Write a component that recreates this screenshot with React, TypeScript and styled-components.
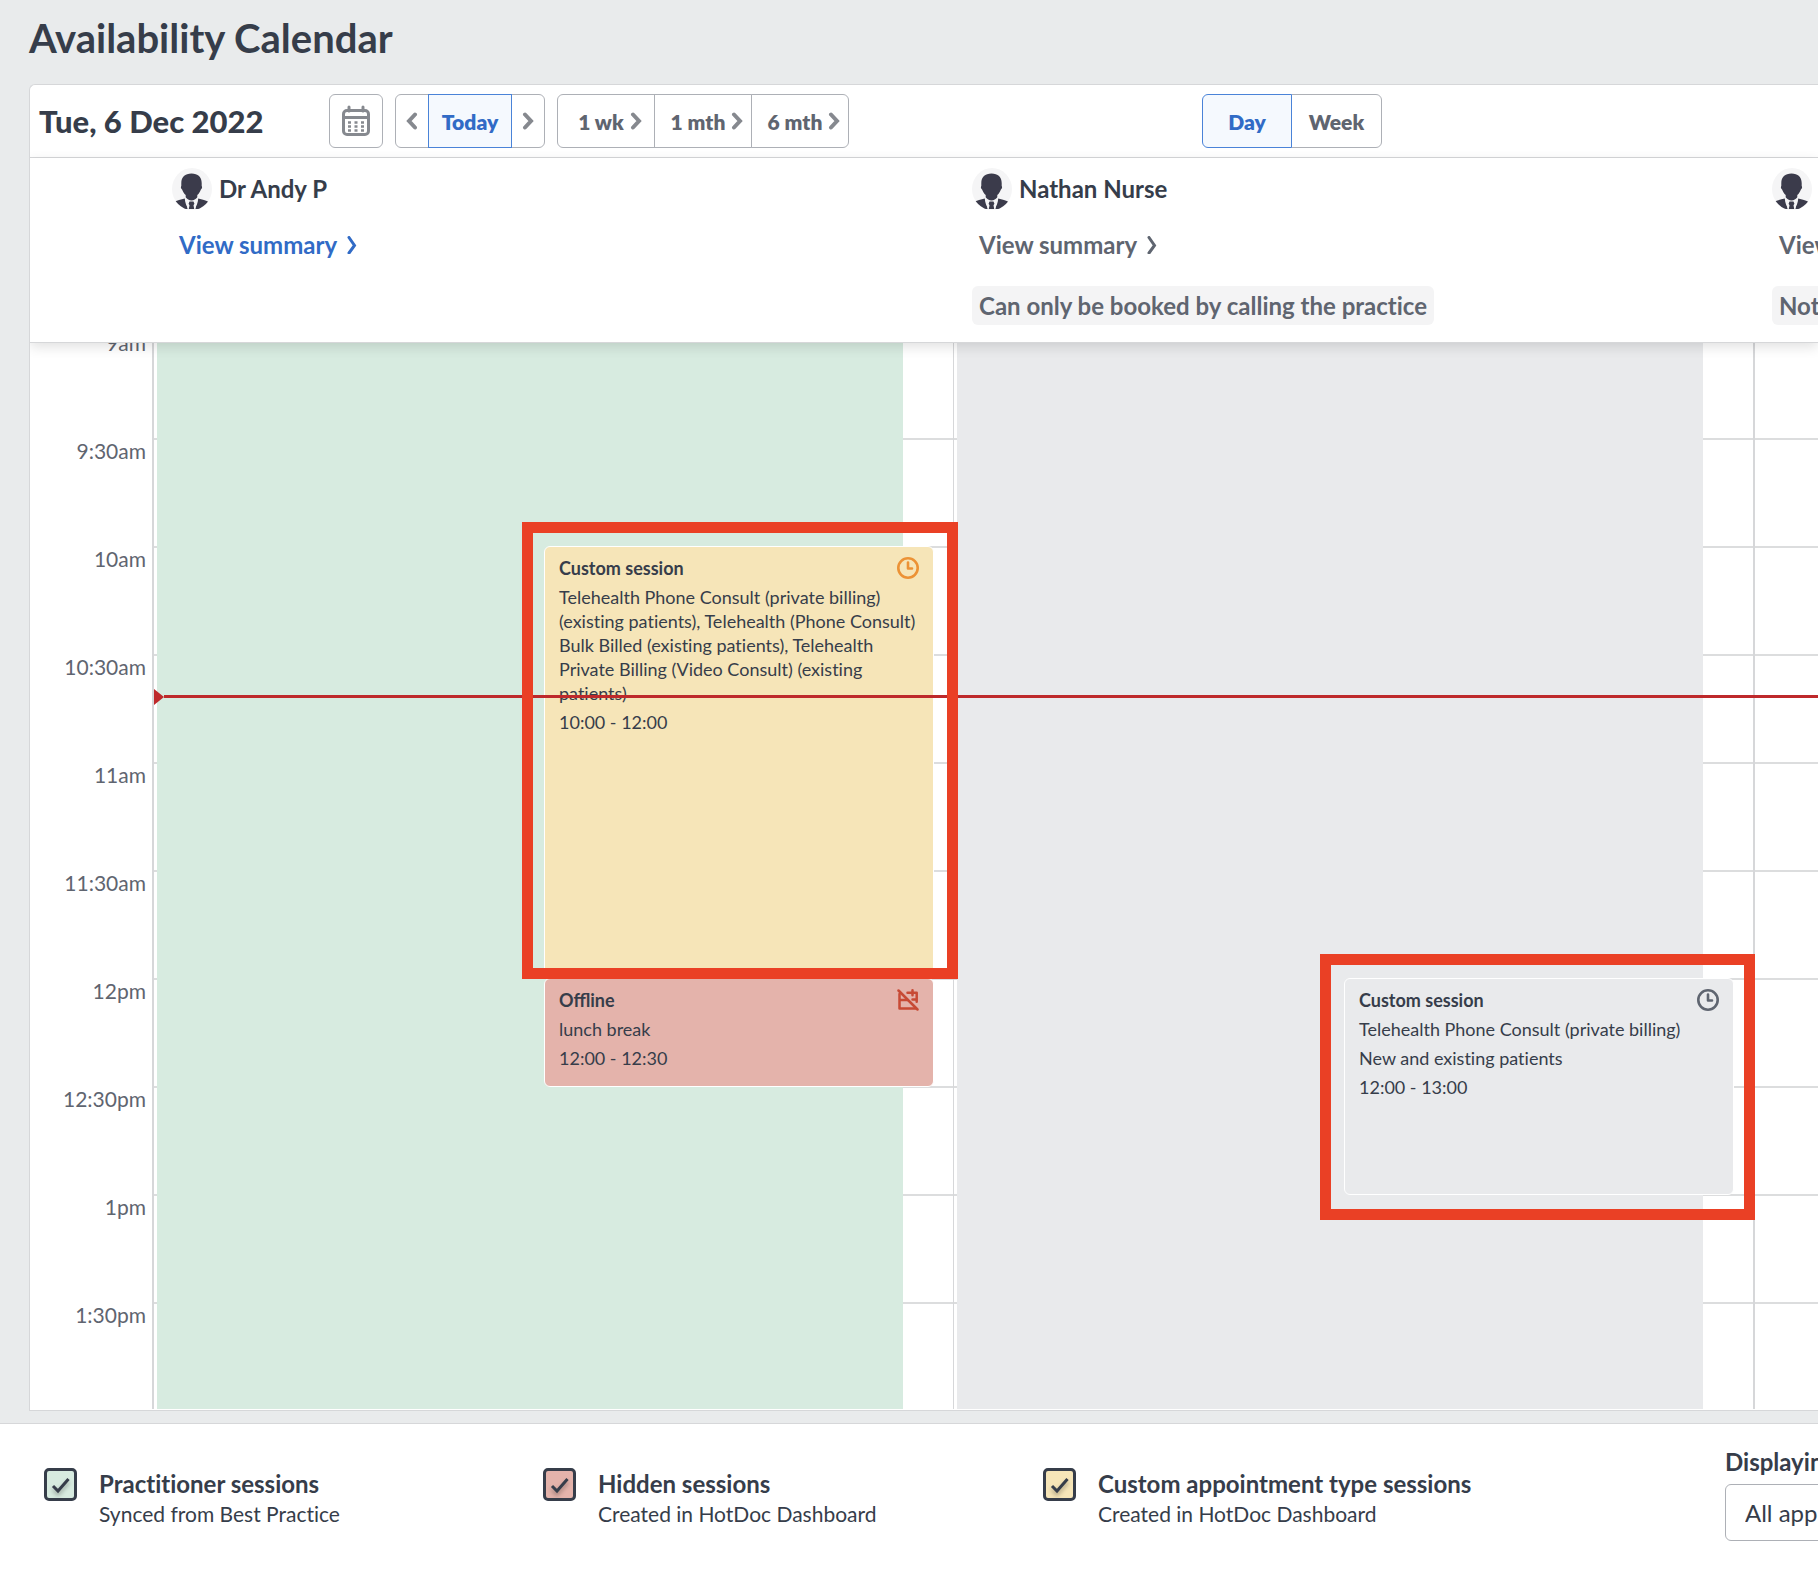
import React from "react";
import styled, { createGlobalStyle } from "styled-components";

const color = {
  page: "#e9ebec",
  line: "#d6d7d9",
  control: "#adb0b6",
  ink: "#363d4a",
  muted: "#5f6570",
  icon: "#86898f",
  blue: "#316bc6",
  blueLine: "#4a83d8",
  blueTint: "#f5f9fe",
  now: "#be292b",
  callout: "#ea4025",
};

const ROW = 108;
const DAY_START = 9 * 60;
const ROW_COUNT = 10;

const Global = createGlobalStyle`
  *, *::before, *::after { box-sizing: border-box; }
  html, body { margin: 0; }
  body {
    overflow-x: hidden;
    background: ${color.page};
    color: ${color.ink};
    font-family: Lato, "Liberation Sans", sans-serif;
    font-variant-ligatures: none;
  }
  button, input, select { font: inherit; color: inherit; margin: 0; }
`;

const Page = styled.div`
  display: flex;
  flex-direction: column;
  height: 100vh;
  min-height: 900px;
  overflow: hidden;
`;

const PageTitle = styled.h1`
  margin: 0;
  padding: 14px 29px 22px;
  font-size: 40px;
  line-height: 48px;
  font-weight: 700;
`;

const Card = styled.main`
  flex: 1;
  min-height: 0;
  display: flex;
  flex-direction: column;
  margin-left: 29px;
  overflow: hidden;
  background: #fff;
  border: 1px solid ${color.line};
  border-right: 0;
  border-top-left-radius: 6px;
`;

const Toolbar = styled.div`
  display: grid;
  grid-template-columns: 1172fr 616fr;
  align-items: center;
  height: 73px;
  flex: none;
  border-bottom: 1px solid ${color.line};
`;

const ToolbarMain = styled.div`
  display: flex;
  align-items: center;
  gap: 12px;
  padding-left: 9px;
`;

const CurrentDate = styled.h2`
  margin: 0;
  width: 278px;
  white-space: nowrap;
  font-size: 31px;
  line-height: 40px;
  font-weight: 900;
`;

const ButtonGroup = styled.div`
  display: flex;
`;

const ToolButton = styled.button<{ $width: number; $active?: boolean; $step?: boolean }>`
  position: relative;
  z-index: ${(p) => (p.$active ? 1 : 0)};
  display: flex;
  align-items: center;
  justify-content: center;
  gap: 6px;
  width: ${(p) => p.$width}px;
  height: 54px;
  padding: 2px 0 0 ${(p) => (p.$step ? 8 : 0)}px;
  border: 1px solid ${(p) => (p.$active ? color.blueLine : color.control)};
  background: ${(p) => (p.$active ? color.blueTint : "#fff")};
  color: ${(p) => (p.$active ? color.blue : color.muted)};
  font-size: 21px;
  line-height: 24px;
  font-weight: 800;
  cursor: pointer;

  & + & { margin-left: -1px; }
  &:first-child { border-top-left-radius: 6px; border-bottom-left-radius: 6px; }
  &:last-child { border-top-right-radius: 6px; border-bottom-right-radius: 6px; }
  & > svg { margin-bottom: 2px; }
`;

const People = styled.div`
  position: relative;
  z-index: 5;
  display: flex;
  flex: none;
  height: 185px;
  padding-left: 123px;
  background: #fff;
  border-bottom: 1px solid ${color.line};
  box-shadow: 0 4px 12px rgba(0, 0, 0, 0.12);
`;

const Person = styled.section`
  flex: 0 0 800px;
  display: flex;
  flex-direction: column;
  align-items: flex-start;
  padding: 10px 19px 0;
`;

const PersonName = styled.h3`
  display: flex;
  align-items: center;
  gap: 7px;
  height: 42px;
  margin: 0;
  font-size: 24px;
  line-height: 28px;
  font-weight: 700;
`;

const SummaryLink = styled.a<{ $primary?: boolean }>`
  display: flex;
  align-items: center;
  gap: 10px;
  margin-top: 19px;
  padding: 0 7px;
  color: ${(p) => (p.$primary ? color.blue : color.muted)};
  font-size: 24px;
  line-height: 32px;
  font-weight: 700;
  text-decoration: none;
`;

const Restriction = styled.p`
  margin: 25px 0 0;
  padding: 4px 7px 3px;
  border-radius: 6px;
  background: #f4f4f5;
  color: ${color.muted};
  font-size: 24px;
  line-height: 32px;
  font-weight: 700;
  white-space: nowrap;
`;

const Viewport = styled.div`
  flex: 1;
  min-height: 0;
  overflow: hidden;
  margin-bottom: 1px;
`;

const Timeline = styled.div`
  position: relative;
  display: flex;
  margin-top: -13px;
`;

const Gutter = styled.div`
  flex: 0 0 123px;
  display: grid;
  grid-template-rows: repeat(${ROW_COUNT}, ${ROW}px);
  border-right: 1px solid ${color.line};
`;

const TimeLabel = styled.span`
  padding-right: 6px;
  text-align: right;
  color: ${color.muted};
  font-size: 21px;
  line-height: 26px;
`;

const Column = styled.div<{ $divider: number }>`
  flex: 0 0 800px;
  display: grid;
  grid-template-columns: 100%;
  grid-template-rows: repeat(${ROW_COUNT}, ${ROW}px);
  border-left: ${(p) => p.$divider}px solid ${color.line};
`;

const Slot = styled.div<{ $row: number }>`
  grid-column: 1;
  grid-row: ${(p) => p.$row};
  border-top: 2px solid #dcddde;
`;

const Availability = styled.div<{ $tone: string }>`
  grid-column: 1;
  grid-row: 1 / -1;
  margin: 0 50px 0 3px;
  background: ${(p) => p.$tone};
`;

const Session = styled.article<{ $from: number; $to: number; $tone: string }>`
  grid-column: 1;
  grid-row: ${(p) => p.$from} / ${(p) => p.$to};
  display: grid;
  grid-template-columns: 1fr 22px;
  align-content: start;
  row-gap: 5px;
  margin: 0 19px -1px 390px;
  padding: 9px 14px;
  border: 1px solid #fff;
  border-radius: 6px;
  background: ${(p) => p.$tone};
  font-size: 18px;
  line-height: 24px;

  & > svg { margin-top: 1px; }
`;

const SessionTitle = styled.h4`
  margin: 0;
  font-size: 18px;
  font-weight: 700;
  font-variant-ligatures: normal;
`;

const SessionText = styled.p`
  grid-column: 1 / -1;
  margin: 0;
`;

const Callout = styled.div<{ $from: number; $to: number; $edges: string }>`
  grid-column: 1;
  grid-row: ${(p) => p.$from} / ${(p) => p.$to};
  position: relative;
  z-index: 4;
  margin: ${(p) => p.$edges};
  border: 11px solid ${color.callout};
  pointer-events: none;
`;

const NowMarker = styled.div`
  position: absolute;
  z-index: 3;
  left: 124px;
  right: 0;
  display: flex;
  align-items: center;
  height: 15px;

  &::before {
    content: "";
    border: solid transparent;
    border-width: 8px 0 8px 10px;
    border-left-color: ${color.now};
  }
  &::after {
    content: "";
    flex: 1;
    height: 3px;
    background: ${color.now};
  }
`;

const Footer = styled.footer`
  display: grid;
  grid-template-columns: minmax(0, 499fr) minmax(0, 500fr) minmax(0, 682fr) minmax(0, 93fr);
  align-items: start;
  flex: none;
  height: 149px;
  margin-top: 12px;
  padding-left: 44px;
  background: #fff;
  border-top: 1px solid ${color.line};
`;

const LegendItem = styled.label`
  display: flex;
  gap: 22px;
  padding-top: 44px;
  cursor: pointer;
`;

const CheckWrap = styled.span`
  display: grid;
  width: 33px;
  height: 33px;

  & > * { grid-area: 1 / 1; }
  & > svg { pointer-events: none; filter: drop-shadow(0 3px 2px rgba(0, 0, 0, 0.3)); }
  & > input:not(:checked) + svg { visibility: hidden; }
`;

const Check = styled.input<{ $tone: string }>`
  appearance: none;
  width: 33px;
  height: 33px;
  border: 3px solid ${color.ink};
  border-radius: 5px;
  background: ${(p) => p.$tone};
`;

const LegendText = styled.span`
  display: flex;
  flex-direction: column;
  font-size: 21px;
  line-height: 28px;
`;

const LegendTitle = styled.strong`
  font-size: 24px;
  line-height: 32px;
  font-weight: 700;
`;

const Filter = styled.div`
  display: flex;
  flex-direction: column;
  gap: 6px;
  padding-top: 22px;
`;

const FilterLabel = styled.label`
  font-size: 24px;
  line-height: 32px;
  font-weight: 700;
`;

const FilterSelect = styled.select`
  appearance: none;
  width: 320px;
  height: 57px;
  padding: 0 19px;
  border: 1px solid ${color.control};
  border-radius: 6px;
  background: #fff;
  font-size: 24px;
`;

function Chevron({ dir = "right" }: { dir?: "left" | "right" }) {
  return (
    <svg width="12" height="18" viewBox="0 0 12 18" fill="none" stroke={color.icon} strokeWidth="4" strokeLinecap="round" strokeLinejoin="miter" aria-hidden="true">
      <path d={dir === "right" ? "M3 2.500 9 9l-6 6.500" : "M9 2.500 3 9l6 6.500"} />
    </svg>
  );
}

function LinkChevron() {
  return (
    <svg width="10" height="18" viewBox="0 0 10 18" fill="none" stroke="currentColor" strokeWidth="3" strokeLinecap="round" aria-hidden="true">
      <path d="M2 1.500 7.500 9.500 2 17" />
    </svg>
  );
}

function CalendarIcon() {
  return (
    <svg width="28" height="32" viewBox="0 0 28 32" fill="none" stroke={color.icon} aria-hidden="true">
      <rect x="1.500" y="5.500" width="25" height="24" rx="3.500" strokeWidth="3" />
      <path d="M1.500 12.500h25" strokeWidth="3" />
      <path d="M7 2v4M21 2v4" strokeWidth="3" strokeLinecap="round" />
      <path d="M6 17.500h3M12.500 17.500h3M19 17.500h3M6 21.500h3M12.500 21.500h3M19 21.500h3M6 25.500h3M12.500 25.500h3M19 25.500h3" strokeWidth="2.400" />
    </svg>
  );
}

function Avatar() {
  const id = React.useId();
  return (
    <svg width="40" height="42" viewBox="0 0 40 42" aria-hidden="true">
      <defs>
        <clipPath id={id}>
          <ellipse cx="20" cy="21" rx="20" ry="21" />
        </clipPath>
      </defs>
      <g clipPath={`url(#${id})`}>
        <rect width="40" height="42" fill="#f5f5f6" />
        <g fill="#3b3b4b">
          <path d="M19.500 5.500C13 5.500 9.300 9.300 9.300 15v3c-.8.600-.4 3 .8 3.400.7 2.200 2 4.200 3.600 5.600v2.300c1.300 2 3.500 3.200 5.800 3.200s4.500-1.200 5.800-3.200V27c1.600-1.400 2.900-3.400 3.600-5.600 1.200-.4 1.600-2.800.8-3.400v-3c0-5.700-3.700-9.500-10.200-9.500Z" />
          <path d="M12.800 30.500C9 31.500 5 32.200 1.500 34.500V41h15c-2-3-3.500-6.500-3.700-10.500ZM26.200 30.500c3.800 1 7.800 1.700 11.300 4V41h-15c2-3 3.500-6.500 3.700-10.500Z" />
        </g>
        <path d="m14 32 3.500 2.500-.5 6.500h-1.500ZM25 32l-3.500 2.500.5 6.500h1.500Z" fill="#f5f5f6" />
        <path d="M17.500 33.500h4l.9 2.300-.9 1.500.7 3.700h-5.400l.7-3.700-.9-1.500Z" fill="#3b3b4b" />
      </g>
    </svg>
  );
}

function ClockIcon({ tone }: { tone: string }) {
  return (
    <svg width="22" height="22" viewBox="0 0 22 22" fill="none" stroke={tone} strokeWidth="2.600" aria-hidden="true">
      <circle cx="11" cy="11" r="9.700" />
      <path d="M11 5.500V11.500h4" strokeLinecap="round" strokeLinejoin="round" />
    </svg>
  );
}

function CalendarOffIcon() {
  return (
    <svg width="22" height="22" viewBox="0 0 22 22" fill="none" stroke="#c74a35" strokeWidth="2.500" strokeLinecap="round" strokeLinejoin="round" aria-hidden="true">
      <path d="M1.500 1.500 20.500 20.500" />
      <path d="M2.500 5v14.500H18.500M2.500 11h8" />
      <path d="M10.500 3.800h9.200v9M15.500 1.300v5M15.500 10.500h4" />
    </svg>
  );
}

function CheckMark() {
  return (
    <svg width="33" height="33" viewBox="0 0 33 33" fill="none" stroke={color.ink} strokeWidth="3" aria-hidden="true">
      <path d="m9 18 5 5L24.500 11" />
    </svg>
  );
}

type SessionData = {
  title: string;
  lines: string[];
  from: number;
  to: number;
  tone: string;
  icon: React.ReactNode;
};

type Practitioner = {
  id: string;
  name: string;
  restriction?: string;
  primary?: boolean;
  divider: number;
  tone?: string;
  sessions: SessionData[];
  callout?: { from: number; to: number; edges: string };
};

const practitioners: Practitioner[] = [
  {
    id: "andy",
    name: "Dr Andy P",
    primary: true,
    divider: 1,
    tone: "#d7ebe0",
    sessions: [
      {
        title: "Custom session",
        lines: [
          "Telehealth Phone Consult (private billing) (existing patients), Telehealth (Phone Consult) Bulk Billed (existing patients), Telehealth Private Billing (Video Consult) (existing patients)",
          "10:00 - 12:00",
        ],
        from: 3,
        to: 7,
        tone: "#f6e5b8",
        icon: <ClockIcon tone="#ec9235" />,
      },
      {
        title: "Offline",
        lines: ["lunch break", "12:00 - 12:30"],
        from: 7,
        to: 8,
        tone: "#e4b3ab",
        icon: <CalendarOffIcon />,
      },
    ],
    callout: { from: 3, to: 7, edges: "-24px -5px -1px 368px" },
  },
  {
    id: "nathan",
    name: "Nathan Nurse",
    restriction: "Can only be booked by calling the practice",
    divider: 1,
    tone: "#e9eaec",
    sessions: [
      {
        title: "Custom session",
        lines: ["Telehealth Phone Consult (private billing)", "New and existing patients", "12:00 - 13:00"],
        from: 7,
        to: 9,
        tone: "#e9eaec",
        icon: <ClockIcon tone={color.muted} />,
      },
    ],
    callout: { from: 7, to: 9, edges: "-24px -2px -26px 366px" },
  },
  { id: "third", name: "", restriction: "Not available online", divider: 2, sessions: [] },
];

const legend = [
  { title: "Practitioner sessions", note: "Synced from Best Practice", tone: "#d7ebe0" },
  { title: "Hidden sessions", note: "Created in HotDoc Dashboard", tone: "#e4b3ab" },
  { title: "Custom appointment type sessions", note: "Created in HotDoc Dashboard", tone: "#f6e5b8" },
];

const rows = Array.from({ length: ROW_COUNT }, (_, i) => i);

function timeLabel(row: number) {
  const minutes = DAY_START + row * 30;
  const hour = Math.floor(minutes / 60);
  const rest = minutes % 60 ? ":30" : "";
  return `${hour > 12 ? hour - 12 : hour}${rest}${hour < 12 ? "am" : "pm"}`;
}

export default function App() {
  const now = 10 * 60 + 42;
  const nowTop = Math.round(((now - DAY_START) / 30) * ROW) - 8;

  return (
    <Page>
      <Global />
      <PageTitle>Availability Calendar</PageTitle>
      <Card>
        <Toolbar>
          <ToolbarMain>
            <CurrentDate>Tue, 6 Dec 2022</CurrentDate>
            <ButtonGroup>
              <ToolButton $width={54} aria-label="Pick a date">
                <CalendarIcon />
              </ToolButton>
            </ButtonGroup>
            <ButtonGroup>
              <ToolButton $width={34} aria-label="Previous day">
                <Chevron dir="left" />
              </ToolButton>
              <ToolButton $width={84} $active>
                Today
              </ToolButton>
              <ToolButton $width={34} aria-label="Next day">
                <Chevron />
              </ToolButton>
            </ButtonGroup>
            <ButtonGroup>
              {["1 wk", "1 mth", "6 mth"].map((step) => (
                <ToolButton key={step} $width={98} $step>
                  {step}
                  <Chevron />
                </ToolButton>
              ))}
            </ButtonGroup>
          </ToolbarMain>
          <ButtonGroup>
            <ToolButton $width={90} $active>
              Day
            </ToolButton>
            <ToolButton $width={91}>Week</ToolButton>
          </ButtonGroup>
        </Toolbar>

        <People>
          {practitioners.map((p) => (
            <Person key={p.id}>
              <PersonName>
                <Avatar />
                {p.name}
              </PersonName>
              <SummaryLink href="#summary" $primary={p.primary}>
                View summary
                <LinkChevron />
              </SummaryLink>
              {p.restriction && <Restriction>{p.restriction}</Restriction>}
            </Person>
          ))}
        </People>

        <Viewport>
          <Timeline>
            <Gutter>
              {rows.map((row) => (
                <TimeLabel key={row}>{timeLabel(row)}</TimeLabel>
              ))}
            </Gutter>
            {practitioners.map((p) => (
              <Column key={p.id} $divider={p.divider}>
                {rows.map((row) => (
                  <Slot key={row} $row={row + 1} />
                ))}
                {p.tone && <Availability $tone={p.tone} />}
                {p.sessions.map((s) => (
                  <Session key={s.from} $from={s.from} $to={s.to} $tone={s.tone}>
                    <SessionTitle>{s.title}</SessionTitle>
                    {s.icon}
                    {s.lines.map((line) => (
                      <SessionText key={line}>{line}</SessionText>
                    ))}
                  </Session>
                ))}
                {p.callout && <Callout $from={p.callout.from} $to={p.callout.to} $edges={p.callout.edges} />}
              </Column>
            ))}
            <NowMarker style={{ top: nowTop }} />
          </Timeline>
        </Viewport>
      </Card>

      <Footer>
        {legend.map((item) => (
          <LegendItem key={item.title}>
            <CheckWrap>
              <Check type="checkbox" defaultChecked $tone={item.tone} />
              <CheckMark />
            </CheckWrap>
            <LegendText>
              <LegendTitle>{item.title}</LegendTitle>
              {item.note}
            </LegendText>
          </LegendItem>
        ))}
        <Filter>
          <FilterLabel htmlFor="displaying">Displaying</FilterLabel>
          <FilterSelect id="displaying">
            <option>All appointments</option>
          </FilterSelect>
        </Filter>
      </Footer>
    </Page>
  );
}
